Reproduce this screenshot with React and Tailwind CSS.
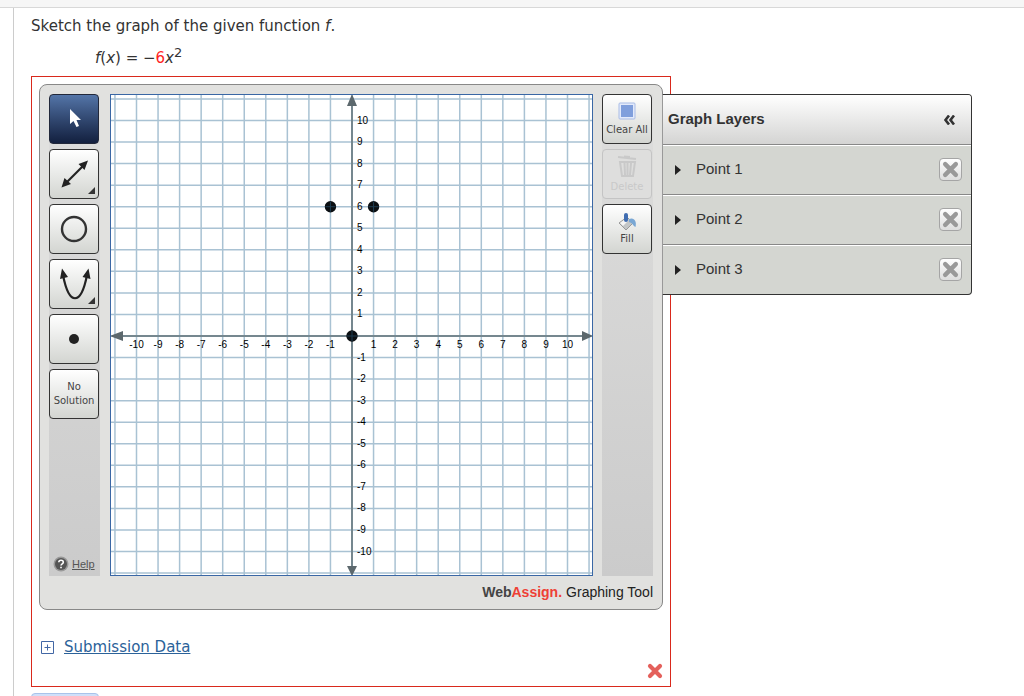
const UNIT = 21.55;
const CENTER = 242;
const TICKS = Array.from({ length: 21 }, (_, index) => index - 10);
const GRID_LINES = Array.from({ length: 23 }, (_, index) => index - 11);

const POINTS = [
    { name: 'Point 1', x: -1, y: 6 },
    { name: 'Point 2', x: 0, y: 0 },
    { name: 'Point 3', x: 1, y: 6 },
];

function ToolButton({ label, active = false, disabled = false, children }) {
    const look = active
        ? 'border-[#22283a] bg-linear-to-b from-[#5475a8] to-[#13203f] text-white'
        : disabled
          ? 'border-[#c4c4c4] bg-[#dededd] text-[#c9c9c9]'
          : 'border-[#333] bg-linear-to-b from-white to-[#d3d5d1] text-[#444]';
    return (
        <button
            type="button"
            aria-label={label}
            disabled={disabled}
            className={`flex h-[50px] w-[50px] shrink-0 flex-col items-center justify-center rounded-[4px] border font-['DejaVu_Sans',Verdana,sans-serif] text-[10px] leading-[14px] ${look}`}
        >
            {children}
        </button>
    );
}

function LineIcon() {
    return (
        <svg width="48" height="48" viewBox="0 0 48 48" fill="#222">
            <path d="M16 33 33 16" stroke="#222" strokeWidth="2.200" />
            <path d="M38 10.500 34.500 20 28.500 14ZM11.500 37.500 14.500 28 21 34Z" />
            <path d="M45 37v7h-7z" fill="#333" />
        </svg>
    );
}

function ParabolaIcon() {
    return (
        <svg width="48" height="48" viewBox="0 0 48 48" fill="#222">
            <path d="M13 15C19 46 31 46 37 15" fill="none" stroke="#222" strokeWidth="2.200" />
            <path d="M12 8.500 18 17 10 19ZM38.500 8.500 32.500 17 40.500 19Z" />
            <path d="M45 37v7h-7z" fill="#333" />
        </svg>
    );
}

function CrossIcon({ size, fill }) {
    return (
        <svg width={size} height={size} viewBox="0 0 16 16" className="shrink-0">
            <path d="M3 3 13 13M13 3 3 13" stroke={fill} strokeWidth="4.200" strokeLinecap="round" />
        </svg>
    );
}

function Graph() {
    return (
        <svg viewBox="0 0 481 480" className="block w-full" fontFamily="'Liberation Sans', Arial, sans-serif" fontSize="10">
            <g transform="translate(-1 -1)">
                {GRID_LINES.map((n) => (
                    <g key={n} stroke="#a9c2d3" strokeWidth="1.500">
                        <path d={`M${CENTER + n * UNIT} 0V482`} />
                        <path d={`M0 ${CENTER + n * UNIT}H483`} />
                    </g>
                ))}
                <path d="M242 6V476M6 242H477" stroke="#75878f" strokeWidth="2" />
                <path d="M242 0 247 12H237ZM242 482 237 472H247ZM0 242 13 237V247ZM483 242 472 237V247Z" fill="#5c686d" />
                {TICKS.filter((n) => n !== 0).map((n) => (
                    <g key={n} fill="#000">
                        <text x={CENTER + n * UNIT} y="254" textAnchor="middle">
                            {n}
                        </text>
                        <text x="247" y={CENTER - n * UNIT + 3}>
                            {n}
                        </text>
                    </g>
                ))}
                {POINTS.map((point) => (
                    <g key={point.name} transform={`translate(${CENTER + point.x * UNIT} ${CENTER - point.y * UNIT})`}>
                        <circle r="5.700" fill="#0b0f12" />
                        <path d="M-5 0H5M0-5V5" stroke="#1d3c50" />
                    </g>
                ))}
            </g>
        </svg>
    );
}

function DrawingTools() {
    return (
        <div className="flex w-[51px] shrink-0 flex-col gap-[5px] bg-linear-to-b from-[#dededd] to-[#cbcbcb]">
            <ToolButton label="Select" active>
                <svg width="48" height="48" viewBox="0 0 48 48">
                    <path d="M20 14V29L23.500 26 26.500 32 29 31 26.500 25H31Z" fill="#fff" />
                </svg>
            </ToolButton>
            <ToolButton label="Line">
                <LineIcon />
            </ToolButton>
            <ToolButton label="Circle">
                <svg width="48" height="48" viewBox="0 0 48 48">
                    <circle cx="24" cy="24" r="12" fill="none" stroke="#333" strokeWidth="2.400" />
                </svg>
            </ToolButton>
            <ToolButton label="Parabola">
                <ParabolaIcon />
            </ToolButton>
            <ToolButton label="Point">
                <svg width="48" height="48" viewBox="0 0 48 48">
                    <circle cx="24" cy="24" r="5" fill="#222" />
                </svg>
            </ToolButton>
            <ToolButton>
                <span>No</span>
                <span>Solution</span>
            </ToolButton>
            <a href="#help" className="mt-auto mb-1 flex items-center gap-[3px] pl-1 text-[11px] leading-4 text-[#555] underline">
                <svg width="16" height="16" viewBox="0 0 16 16">
                    <circle cx="8" cy="8" r="7.500" fill="#999" />
                    <circle cx="8" cy="8" r="6" fill="#555" />
                    <path d="M5.800 6.300C5.800 3.500 10.300 3.500 10.300 6.200 10.300 7.800 8 7.800 8 9.500M8 10.700V12.200" fill="none" stroke="#fff" strokeWidth="1.600" />
                </svg>
                Help
            </a>
        </div>
    );
}

function EditTools() {
    return (
        <div className="flex w-[51px] shrink-0 flex-col gap-[5px] bg-linear-to-b from-[#dededd] to-[#cbcbcb]">
            <ToolButton>
                <svg width="18" height="18" viewBox="0 0 18 18" className="mb-[3px]">
                    <rect x="1" y="1" width="16" height="16" rx="1" fill="#e3eafa" stroke="#a9bce6" />
                    <rect x="3" y="3" width="12" height="12" fill="#809fdc" />
                </svg>
                <span className="whitespace-nowrap">Clear All</span>
            </ToolButton>
            <ToolButton disabled>
                <svg width="22" height="24" viewBox="0 0 22 24" className="mb-[2px]" fill="none" stroke="#c9c9c9" strokeWidth="2">
                    <path d="M2 3 20 5M8 2.500 14 3" />
                    <path d="M4 8H19L17 22H6Z" />
                    <path d="M8.500 9 9 21M11.500 9V21M15 9 14 21" />
                </svg>
                <span>Delete</span>
            </ToolButton>
            <ToolButton>
                <svg width="20" height="20" viewBox="0 0 20 20">
                    <path d="M2 11 10 5 16 11 9 18Z" fill="#c3c6c7" stroke="#999" />
                    <path d="M3 11 9 6.500 11 9 6 14Z" fill="#f5f5f5" />
                    <path d="M12 7C17 5 20 9 18.500 15 16 14 16 11 12 10Z" fill="#79a7d4" />
                    <path d="M9 3V8" stroke="#3f6cb0" strokeWidth="4" strokeLinecap="round" />
                </svg>
                <span>Fill</span>
            </ToolButton>
        </div>
    );
}

function GraphLayers() {
    return (
        <section className="absolute top-[9px] left-full w-[310px] overflow-hidden rounded-r-[4px] border border-l-[#999] border-[#333] bg-[#d4d6d1] text-[15px] text-[#333]">
            <header className="flex h-[49px] items-center justify-between bg-linear-to-b from-white to-[#d4d4d3] pr-[14px] pl-[5px]">
                <h2 className="font-bold">Graph Layers</h2>
                <button type="button" aria-label="Collapse" className="flex h-4 w-4 items-center justify-center">
                    <svg width="12" height="10" viewBox="0 0 12 10" fill="none" stroke="#333" strokeWidth="2.600">
                        <path d="M6 0.500 2.500 5 6 9.500M11 0.500 7.500 5 11 9.500" />
                    </svg>
                </button>
            </header>
            <ul>
                {POINTS.map((point) => (
                    <li key={point.name} className="flex h-[50px] items-center border-t border-[#888] pr-[9px] pl-3 shadow-[inset_0_1px_0_#fff]">
                        <svg width="6" height="10" viewBox="0 0 6 10">
                            <path d="M0 0 6 5 0 10Z" fill="#222" />
                        </svg>
                        <span className="ml-[15px] flex-1">{point.name}</span>
                        <button
                            type="button"
                            aria-label={`Remove ${point.name}`}
                            className="flex h-[23px] w-[23px] items-center justify-center rounded-[4px] border border-[#a5a5a5] bg-linear-to-b from-white to-[#ddd]"
                        >
                            <CrossIcon size={17} fill="#999" />
                        </button>
                    </li>
                ))}
            </ul>
        </section>
    );
}

function GraphingTool() {
    return (
        <div className="relative rounded-[8px] border border-[#888] bg-[#e1e1df] px-[9px] pt-[9px] font-['Liberation_Sans',Arial,sans-serif]">
            <div className="flex">
                <DrawingTools />
                <div className="mr-[9px] ml-[10px] min-w-0 flex-1 border border-[#3a67a5] bg-white">
                    <Graph />
                </div>
                <EditTools />
            </div>
            <p className="flex h-[33px] items-center justify-end gap-1 text-[14px] text-[#222]">
                <span className="font-bold text-[#444]">
                    Web<span className="text-[#ee4036]">Assign.</span>
                </span>
                Graphing Tool
            </p>
            <GraphLayers />
        </div>
    );
}

export default function App() {
    return (
        <div className="flex h-screen flex-col overflow-hidden bg-white font-['DejaVu_Sans',Verdana,sans-serif] text-[15px] text-[#333]">
            <div className="h-2 shrink-0 border-b border-[#d8d8d8] bg-[#f6f6f6]" />
            <main className="ml-[13px] flex-1 border-l border-[#ccc] pr-4 pl-[17px]">
                <p className="pt-2 leading-5">
                    Sketch the graph of the given function <i>f</i>.
                </p>
                <p className="mt-3 pl-16 leading-5">
                    <i>f</i>(<i>x</i>) = −<span className="text-[#f22]">6</span>
                    <i>x</i>
                    <sup className="text-[13px]">2</sup>
                </p>
                <div className="mt-2 max-w-[640px] border border-[#d9291c] p-[7px]">
                    <GraphingTool />
                    <div className="mt-[27px] flex items-center gap-[10px] pl-[2px] leading-5">
                        <svg width="13" height="13" viewBox="0 0 13 13" fill="none" stroke="#4267a5">
                            <path d="M0.500 0.500H12.500V12.500H0.500ZM3.500 6.500H9.500M6.500 3.500V9.500" />
                        </svg>
                        <a href="#submission" className="text-[#2b6299] underline">
                            Submission Data
                        </a>
                    </div>
                    <div className="mt-[6px] flex justify-end">
                        <CrossIcon size={16} fill="#e4605b" />
                    </div>
                </div>
                <button type="button" aria-label="Help" className="mt-[6px] block h-6 w-[68px] rounded-[4px] border border-[#a9c3ea] bg-[#cfe0fa]" />
            </main>
        </div>
    );
}
